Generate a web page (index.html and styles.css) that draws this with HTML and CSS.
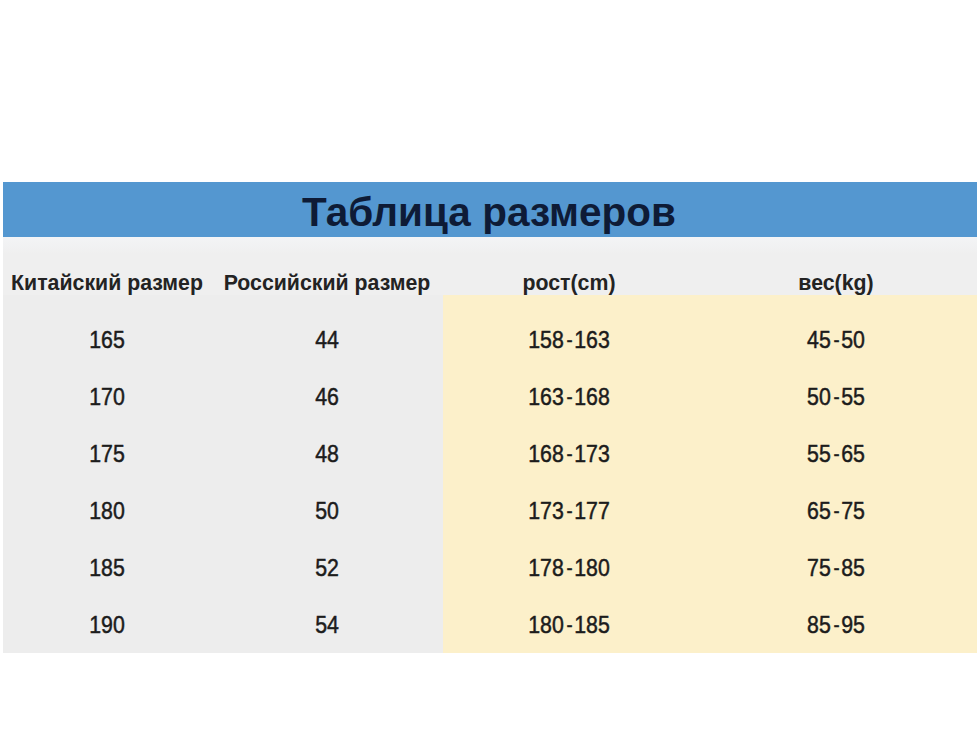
FILE: index.html
```html
<!DOCTYPE html>
<html lang="ru">
<head>
<meta charset="utf-8">
<title>Таблица размеров</title>
<link rel="stylesheet" href="styles.css">
</head>
<body>
<div class="page">
  <div class="chart">
    <div class="title">Таблица размеров</div>
    <div class="grid">
      <div class="col col-gray">
        <div class="head">Китайский размер</div>
        <div class="rows">
          <div class="cell">165</div>
          <div class="cell">170</div>
          <div class="cell">175</div>
          <div class="cell">180</div>
          <div class="cell">185</div>
          <div class="cell">190</div>
        </div>
      </div>
      <div class="col col-gray">
        <div class="head">Российский размер</div>
        <div class="rows">
          <div class="cell">44</div>
          <div class="cell">46</div>
          <div class="cell">48</div>
          <div class="cell">50</div>
          <div class="cell">52</div>
          <div class="cell">54</div>
        </div>
      </div>
      <div class="col col-yellow">
        <div class="head">рост(cm)</div>
        <div class="rows">
          <div class="cell">158<span class="dash">-</span>163</div>
          <div class="cell">163<span class="dash">-</span>168</div>
          <div class="cell">168<span class="dash">-</span>173</div>
          <div class="cell">173<span class="dash">-</span>177</div>
          <div class="cell">178<span class="dash">-</span>180</div>
          <div class="cell">180<span class="dash">-</span>185</div>
        </div>
      </div>
      <div class="col col-yellow">
        <div class="head">вес(kg)</div>
        <div class="rows">
          <div class="cell">45<span class="dash">-</span>50</div>
          <div class="cell">50<span class="dash">-</span>55</div>
          <div class="cell">55<span class="dash">-</span>65</div>
          <div class="cell">65<span class="dash">-</span>75</div>
          <div class="cell">75<span class="dash">-</span>85</div>
          <div class="cell">85<span class="dash">-</span>95</div>
        </div>
      </div>
    </div>
  </div>
</div>
</body>
</html>
```
FILE: styles.css
```css
html, body {
  margin: 0;
  padding: 0;
  background: #ffffff;
}
body {
  font-family: "Liberation Sans", Arial, sans-serif;
  color: #1c1c1c;
}
.page {
  width: 978px;
  height: 729px;
  padding: 182px 1px 0 3px;
  box-sizing: border-box;
}
.chart {
  width: 974px;
}
.title {
  height: 55px;
  background: #5497d0;
  color: #0e1b36;
  font-weight: bold;
  font-size: 40.5px;
  line-height: 61px;
  text-align: center;
  padding-right: 2px;
  box-sizing: border-box;
}
.grid {
  display: grid;
  grid-template-columns: 208px 232px 252px 282px;
}
.col {
  display: flex;
  flex-direction: column;
}
.head {
  height: 58px;
  background: linear-gradient(#f3f4f6, #efefef 30%);
  font-size: 21.3px;
  font-weight: bold;
  color: #232323;
  text-align: center;
  line-height: 1;
  padding-top: 36px;
  box-sizing: border-box;
  white-space: nowrap;
}
.col-gray .rows {
  background: #ededed;
}
.col-yellow .rows {
  background: #fcf0ca;
}
.rows {
  padding-top: 16px;
  display: flex;
  flex-direction: column;
}
.cell {
  height: 57px;
  display: flex;
  align-items: center;
  justify-content: center;
  font-size: 24.5px;
  color: #1c1c1c;
  -webkit-text-stroke: 0.5px #1c1c1c;
  transform: scaleX(0.87);
}
.dash {
  margin: 0 2px 0 3px;
  font-size: 21px;
}
```
